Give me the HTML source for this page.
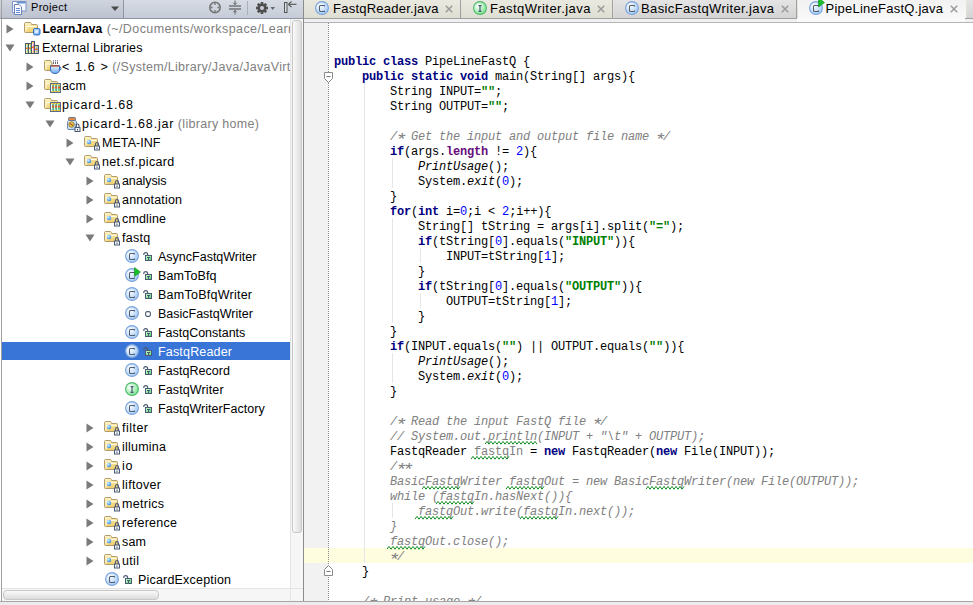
<!DOCTYPE html>
<html><head><meta charset="utf-8">
<style>
*{margin:0;padding:0;box-sizing:border-box}
html,body{width:973px;height:605px;overflow:hidden;background:#ececec;position:relative;font-family:"Liberation Sans",sans-serif}
.abs{position:absolute}
.t{position:absolute;height:19px;line-height:19px;font-size:12.5px;color:#000;white-space:nowrap}
.t b{font-weight:bold;font-size:12px}
.g{color:#808080}
.sel{color:#fff}
.cl{position:absolute;left:334px;height:15px;line-height:15px;font-family:"Liberation Mono",monospace;font-size:12px;letter-spacing:-0.2px;white-space:pre;color:#000}
.k{color:#000080;font-weight:bold}
.f{color:#660e7a;font-weight:bold}
.n{color:#0000ff}
.s{color:#008000;font-weight:bold}
.c{color:#808080;font-style:italic}
.i{font-style:italic}
.w{}
.ast{display:inline-block;width:7px;text-align:center;transform:translateY(3.6px) scale(1.6,1.45)}
.g2{color:#808080}
.tab{position:absolute;top:0;height:18px;line-height:17px;font-size:13px;color:#000;white-space:nowrap}
</style></head><body>
<svg width="0" height="0" style="position:absolute">
<defs>
<radialGradient id="gC" cx="0.35" cy="0.35" r="0.75"><stop offset="0" stop-color="#ffffff"/><stop offset="1" stop-color="#9cc4f4"/></radialGradient>
<radialGradient id="gI" cx="0.35" cy="0.35" r="0.75"><stop offset="0" stop-color="#ffffff"/><stop offset="1" stop-color="#70e488"/></radialGradient>
<linearGradient id="gF" x1="0" y1="0" x2="0.3" y2="1"><stop offset="0" stop-color="#fff6c8"/><stop offset="1" stop-color="#f0d070"/></linearGradient>
<linearGradient id="gB" x1="0" y1="0" x2="1" y2="1"><stop offset="0" stop-color="#cfe6ff"/><stop offset="1" stop-color="#5a9ee8"/></linearGradient>
<radialGradient id="gD" cx="0.35" cy="0.35" r="0.7"><stop offset="0" stop-color="#d8f0ff"/><stop offset="1" stop-color="#2a86e8"/></radialGradient>
<linearGradient id="gCup" x1="0" y1="0" x2="0" y2="1"><stop offset="0" stop-color="#f0f8ff"/><stop offset="1" stop-color="#6aa8f0"/></linearGradient>
<linearGradient id="gJar" x1="0" y1="0" x2="1" y2="1"><stop offset="0" stop-color="#f4faff"/><stop offset="1" stop-color="#9cc8f0"/></linearGradient>
<linearGradient id="gL" x1="0" y1="0" x2="1" y2="1"><stop offset="0" stop-color="#d8ffd8"/><stop offset="1" stop-color="#50d070"/></linearGradient>
</defs></svg>

<!-- left panel -->
<div class="abs" style="left:0;top:0;width:303px;height:601px;background:#fff;overflow:hidden">
  <div class="abs" style="left:0;top:0;width:303px;height:18px;background:linear-gradient(#d6dbe4,#c6ccd7)"></div>
  <div class="abs" style="left:0;top:0;width:123px;height:18px;background:linear-gradient(#cfd4de,#bcc3cf)"></div>
  <div class="abs" style="left:123px;top:0;width:1px;height:18px;background:#8f96a2"></div>
  <div class="abs" style="left:0;top:18px;width:303px;height:1px;background:#8f96a2"></div>
  <div class="abs" style="left:1px;top:0;width:1px;height:601px;background:#a0a0a0"></div>
  <div class="t" style="left:31px;top:-2px;font-size:11px;letter-spacing:0.3px">Project</div>
  <svg style="position:absolute;left:11px;top:1px" width="16" height="15" viewBox="0 0 16 15" ><rect x="4.5" y="0.5" width="10.5" height="9.5" fill="#f4f8ff" stroke="#7a94c4"/><rect x="5" y="1" width="9.5" height="1.5" fill="#6a94d8"/><path d="M1.5 0.5 H5 L7 2.5 V11.5 H1.5Z" fill="#fff" stroke="#8098c8"/><path d="M2.5 4.5 H5 M2.5 6.5 H5 M2.5 8.5 H5" stroke="#8aa8e0" stroke-width="0.8"/><path d="M3.5 3.5 H8 L10.5 6 V13.5 H3.5Z" fill="#fff" stroke="#6a84bc"/><path d="M5 7.5 H9 M5 9.5 H9 M5 11.5 H9" stroke="#4a78d0" stroke-width="0.9"/></svg>
  <svg style="position:absolute;left:111px;top:6px" width="9" height="6" viewBox="0 0 9 6" ><path d="M0 0.5 H8 L4 5Z" fill="#4a4a4a"/></svg>
  <svg style="position:absolute;left:209px;top:1px" width="14" height="14" viewBox="0 0 14 14" ><circle cx="6" cy="6.5" r="5.2" fill="none" stroke="#767676" stroke-width="1.6"/><path d="M6 2 V4 M6 9 V11 M1.5 6.5 H3.5 M8.5 6.5 H10.5" stroke="#767676" stroke-width="1.3"/></svg>
  <svg style="position:absolute;left:229px;top:0px" width="14" height="15" viewBox="0 0 14 15" ><path d="M0 6 H12 M0 9 H12" stroke="#444" stroke-width="1.1" fill="none"/><path d="M6 0.5 V4.5 M4.3 2.8 L6 4.6 L7.7 2.8 M6 14.5 V10.5 M4.3 12.2 L6 10.4 L7.7 12.2" stroke="#555" stroke-width="0.9" fill="none"/></svg>
  <div class="abs" style="left:247px;top:1px;width:1px;height:14px;background:#aab0ba"></div>
  <svg style="position:absolute;left:256px;top:0px" width="20" height="15" viewBox="0 0 20 15" ><g transform="translate(6 8)"><path d="M-1.2 -6 H1.2 L1.6 -3.8 L3.4 -5 L5 -3.4 L3.8 -1.6 L6 -1.2 V1.2 L3.8 1.6 L5 3.4 L3.4 5 L1.6 3.8 L1.2 6 H-1.2 L-1.6 3.8 L-3.4 5 L-5 3.4 L-3.8 1.6 L-6 1.2 V-1.2 L-3.8 -1.6 L-5 -3.4 L-3.4 -5 L-1.6 -3.8Z" fill="#4e4e4e"/><circle r="2" fill="#c9ced8"/></g><path d="M14.5 7 H19 L16.75 10Z" fill="#666"/></svg>
  <svg style="position:absolute;left:284px;top:0px" width="16" height="15" viewBox="0 0 16 15" ><rect x="0.5" y="2.5" width="2.5" height="10" fill="#d8dde6" stroke="#555"/><path d="M5 4.3 H12.5" stroke="#555" stroke-width="1.1"/><path d="M4.3 4.3 L7.5 1.5 M4.3 4.3 L7.5 7" stroke="#555" stroke-width="1.1" fill="none"/></svg>
  <svg style="position:absolute;left:6px;top:24px" width="8" height="10" viewBox="0 0 8 10" ><path d="M0.5 0.5 L7.5 5 L0.5 9.5Z" fill="#7a7a7a"/></svg><svg style="position:absolute;left:24px;top:22px" width="17" height="14" viewBox="0 0 17 14" ><path d="M1.5 0.5 H6 Q7 0.5 7.3 1.5 L7.6 2.5 H12.5 Q13.5 2.5 13.5 3.5 V9.5 Q13.5 10.5 12.5 10.5 H1.5 Q0.5 10.5 0.5 9.5 V1.5 Q0.5 0.5 1.5 0.5Z" fill="url(#gF)" stroke="#b09c6c"/><path d="M2 9.5 V4.5 H12.5" fill="none" stroke="#fffbe6" stroke-width="1"/><path d="M1.5 1.8 H6.2" fill="none" stroke="#fff6cc" stroke-width="1"/><rect x="9.5" y="6.5" width="6.5" height="6.5" rx="1.6" fill="url(#gB)" stroke="#2d6cc6"/><rect x="11.2" y="8.2" width="3" height="3" fill="#eaf4ff" opacity="0.9"/></svg><div class="t " style="left:42px;top:20px"><b style="margin-left:0.5px"><span style="letter-spacing:0.028px">LearnJava</span></b> <span class="g" style="letter-spacing:0.43px;margin-left:1px">(~/Documents/workspace/LearnJava)</span></div><svg style="position:absolute;left:5px;top:44px" width="10" height="8" viewBox="0 0 10 8" ><path d="M0.5 0.5 L9.5 0.5 L5 7.5Z" fill="#7a7a7a"/></svg><svg style="position:absolute;left:25px;top:41px" width="14" height="13" viewBox="0 0 14 13" ><rect x="0.5" y="2.5" width="3" height="10" fill="#86d8a8" stroke="#4c5a72"/><rect x="1" y="3" width="1" height="9" fill="#ffffff" opacity="0.8"/><rect x="1" y="3.2" width="2" height="1" fill="#f8d030" opacity="0.9"/><rect x="1" y="6.5" width="2" height="1.6" fill="#f07010" opacity="0.9"/><rect x="1" y="10.4" width="2" height="1" fill="#f8e040" opacity="0.9"/><rect x="3.5" y="2.5" width="3" height="10" fill="#86d8a8" stroke="#4c5a72"/><rect x="4" y="3" width="1" height="9" fill="#ffffff" opacity="0.8"/><rect x="4" y="3.2" width="2" height="1" fill="#f8d030" opacity="0.9"/><rect x="4" y="6.5" width="2" height="1.6" fill="#f07010" opacity="0.9"/><rect x="4" y="10.4" width="2" height="1" fill="#f8e040" opacity="0.9"/><rect x="6.5" y="0.5" width="3" height="12" fill="#e890b8" stroke="#4c5a72"/><rect x="7" y="1" width="1" height="11" fill="#ffffff" opacity="0.8"/><rect x="7" y="1.2" width="2" height="1" fill="#f8d030" opacity="0.9"/><rect x="7" y="5.4" width="2" height="1.6" fill="#f07010" opacity="0.9"/><rect x="7" y="10.4" width="2" height="1" fill="#f8e040" opacity="0.9"/><rect x="9.5" y="4.5" width="4" height="8" fill="#8ab8f8" stroke="#4c5a72"/><rect x="10" y="5" width="1" height="7" fill="#ffffff" opacity="0.8"/><rect x="10" y="5.2" width="3" height="1" fill="#f8d030" opacity="0.9"/><rect x="10" y="7.6" width="3" height="1.6" fill="#f07010" opacity="0.9"/><rect x="10" y="10.4" width="3" height="1" fill="#f8e040" opacity="0.9"/></svg><div class="t " style="left:42px;top:39px"><span style="letter-spacing:0.19px">External Libraries</span></div><svg style="position:absolute;left:26px;top:62px" width="8" height="10" viewBox="0 0 8 10" ><path d="M0.5 0.5 L7.5 5 L0.5 9.5Z" fill="#7a7a7a"/></svg><svg style="position:absolute;left:44px;top:59px" width="18" height="15" viewBox="0 0 18 15" ><path d="M1.5 1.5 H6 Q7 1.5 7.3 2.5 L7.6 3.5 H8 V11.5 H1.5 Q0.5 11.5 0.5 10.5 V2.5 Q0.5 1.5 1.5 1.5Z" fill="url(#gF)" stroke="#b09c6c"/><path d="M2 10.5 V5 H7" fill="none" stroke="#fffbe6"/><path d="M9.5 1 V2.5 M11.5 1 V2.5 M13.5 1 V2.5" stroke="#7a8aa0" stroke-width="1"/><path d="M9.5 3 V5 M11.5 3 V5 M13.5 3 V5" stroke="#404a58" stroke-width="1" opacity="0.8"/><path d="M6.5 6.5 H15.5 V10 Q15.5 14.5 11 14.5 Q6.5 14.5 6.5 10Z" fill="url(#gCup)" stroke="#3a6cb8"/><path d="M15.5 8 Q17.5 8 17 10 Q16.5 11.5 15 11.5" fill="none" stroke="#3a6cb8"/><path d="M7 7 H15" stroke="#c05a3a" stroke-width="1.5"/></svg><div class="t " style="left:62px;top:58px"><span style="letter-spacing:1.127px">&lt; 1.6 &gt;</span> <span class="g" style="letter-spacing:0.3px">(/System/Library/Java/JavaVirtualMachines)</span></div><svg style="position:absolute;left:26px;top:81px" width="8" height="10" viewBox="0 0 8 10" ><path d="M0.5 0.5 L7.5 5 L0.5 9.5Z" fill="#7a7a7a"/></svg><svg style="position:absolute;left:44px;top:79px" width="17" height="14" viewBox="0 0 17 14" ><path d="M1.5 0.5 H6 Q7 0.5 7.3 1.5 L7.6 2.5 H12.5 Q13.5 2.5 13.5 3.5 V9.5 Q13.5 10.5 12.5 10.5 H1.5 Q0.5 10.5 0.5 9.5 V1.5 Q0.5 0.5 1.5 0.5Z" fill="url(#gF)" stroke="#b09c6c"/><path d="M2 9.5 V4.5 H12.5" fill="none" stroke="#fffbe6" stroke-width="1"/><path d="M1.5 1.8 H6.2" fill="none" stroke="#fff6cc" stroke-width="1"/><rect x="6.5" y="4.5" width="10" height="9" fill="#eef6f0" stroke="#5a6a8a"/><rect x="7" y="5" width="3" height="8" fill="#66d096"/><rect x="7" y="5" width="1" height="8" fill="#f0fff4"/><rect x="7" y="5" width="3" height="1" fill="#f6d040"/><rect x="8" y="7.5" width="2" height="2" fill="#f05a10"/><rect x="7" y="12" width="3" height="1" fill="#f6d040"/><rect x="10" y="5" width="3" height="8" fill="#66d096"/><rect x="10" y="5" width="1" height="8" fill="#f0fff4"/><rect x="10" y="5" width="3" height="1" fill="#f6d040"/><rect x="11" y="7.5" width="2" height="2" fill="#f05a10"/><rect x="10" y="12" width="3" height="1" fill="#f6d040"/><rect x="13" y="5" width="3" height="8" fill="#66d096"/><rect x="13" y="5" width="1" height="8" fill="#f0fff4"/><rect x="13" y="5" width="3" height="1" fill="#f6d040"/><rect x="14" y="7.5" width="2" height="2" fill="#f05a10"/><rect x="13" y="12" width="3" height="1" fill="#f6d040"/><path d="M9.8 5 V13 M12.8 5 V13" stroke="#5a6a8a" stroke-width="0.5"/></svg><div class="t " style="left:62px;top:77px"><span style="letter-spacing:0.088px">acm</span></div><svg style="position:absolute;left:25px;top:101px" width="10" height="8" viewBox="0 0 10 8" ><path d="M0.5 0.5 L9.5 0.5 L5 7.5Z" fill="#7a7a7a"/></svg><svg style="position:absolute;left:44px;top:98px" width="17" height="14" viewBox="0 0 17 14" ><path d="M1.5 0.5 H6 Q7 0.5 7.3 1.5 L7.6 2.5 H12.5 Q13.5 2.5 13.5 3.5 V9.5 Q13.5 10.5 12.5 10.5 H1.5 Q0.5 10.5 0.5 9.5 V1.5 Q0.5 0.5 1.5 0.5Z" fill="url(#gF)" stroke="#b09c6c"/><path d="M2 9.5 V4.5 H12.5" fill="none" stroke="#fffbe6" stroke-width="1"/><path d="M1.5 1.8 H6.2" fill="none" stroke="#fff6cc" stroke-width="1"/><rect x="6.5" y="4.5" width="10" height="9" fill="#eef6f0" stroke="#5a6a8a"/><rect x="7" y="5" width="3" height="8" fill="#66d096"/><rect x="7" y="5" width="1" height="8" fill="#f0fff4"/><rect x="7" y="5" width="3" height="1" fill="#f6d040"/><rect x="8" y="7.5" width="2" height="2" fill="#f05a10"/><rect x="7" y="12" width="3" height="1" fill="#f6d040"/><rect x="10" y="5" width="3" height="8" fill="#66d096"/><rect x="10" y="5" width="1" height="8" fill="#f0fff4"/><rect x="10" y="5" width="3" height="1" fill="#f6d040"/><rect x="11" y="7.5" width="2" height="2" fill="#f05a10"/><rect x="10" y="12" width="3" height="1" fill="#f6d040"/><rect x="13" y="5" width="3" height="8" fill="#66d096"/><rect x="13" y="5" width="1" height="8" fill="#f0fff4"/><rect x="13" y="5" width="3" height="1" fill="#f6d040"/><rect x="14" y="7.5" width="2" height="2" fill="#f05a10"/><rect x="13" y="12" width="3" height="1" fill="#f6d040"/><path d="M9.8 5 V13 M12.8 5 V13" stroke="#5a6a8a" stroke-width="0.5"/></svg><div class="t " style="left:62px;top:96px"><span style="letter-spacing:0.845px">picard-1.68</span></div><svg style="position:absolute;left:45px;top:120px" width="10" height="8" viewBox="0 0 10 8" ><path d="M0.5 0.5 L9.5 0.5 L5 7.5Z" fill="#7a7a7a"/></svg><svg style="position:absolute;left:66px;top:116px" width="15" height="16" viewBox="0 0 15 16" ><path d="M2.5 4.5 Q1.5 5 1.5 7 V12.5 Q1.5 13.5 3 13.5 H9 Q10.5 13.5 10.5 12.5 V7 Q10.5 5 9.5 4.5Z" fill="url(#gJar)" stroke="#6a88b0"/><rect x="2.5" y="1.5" width="7" height="3" rx="0.8" fill="#e08a4a" stroke="#6a7890"/><circle cx="5.5" cy="8.5" r="2.8" fill="#e8c04a" stroke="#8a6a20" stroke-width="0.7"/><path d="M4 7.5 L7 9.5" stroke="#7a3a30" stroke-width="0.9"/><path d="M10.0 11.5 V9.8 Q10.0 8.0 11.5 8.0 Q13.0 8.0 13.0 9.8 V11.5" fill="none" stroke="#4a5a74" stroke-width="1.1"/><rect x="9.0" y="11.5" width="5" height="4" fill="#f4f4f4" stroke="#4a5a74"/><rect x="11.0" y="13.0" width="1" height="1.5" fill="#4a5a74"/></svg><div class="t " style="left:82px;top:115px"><span style="letter-spacing:0.828px">picard-1.68.jar</span> <span class="g"><span style="letter-spacing:0.315px">(library home)</span></span></div><svg style="position:absolute;left:66px;top:138px" width="8" height="10" viewBox="0 0 8 10" ><path d="M0.5 0.5 L7.5 5 L0.5 9.5Z" fill="#7a7a7a"/></svg><svg style="position:absolute;left:84px;top:136px" width="17" height="15" viewBox="0 0 17 15" ><path d="M1.5 0.5 H6 Q7 0.5 7.3 1.5 L7.6 2.5 H12.5 Q13.5 2.5 13.5 3.5 V9.5 Q13.5 10.5 12.5 10.5 H1.5 Q0.5 10.5 0.5 9.5 V1.5 Q0.5 0.5 1.5 0.5Z" fill="url(#gF)" stroke="#b09c6c"/><path d="M2 9.5 V4.5 H12.5" fill="none" stroke="#fffbe6" stroke-width="1"/><path d="M1.5 1.8 H6.2" fill="none" stroke="#fff6cc" stroke-width="1"/><circle cx="5" cy="6" r="2.2" fill="url(#gD)"/><path d="M11.5 10 V8.3 Q11.5 6.5 13 6.5 Q14.5 6.5 14.5 8.3 V10" fill="none" stroke="#4a5a74" stroke-width="1.1"/><rect x="10.5" y="10" width="5" height="4" fill="#f4f4f4" stroke="#4a5a74"/><rect x="12.5" y="11.5" width="1" height="1.5" fill="#4a5a74"/></svg><div class="t " style="left:102px;top:134px"><span style="letter-spacing:0.058px">META-INF</span></div><svg style="position:absolute;left:65px;top:158px" width="10" height="8" viewBox="0 0 10 8" ><path d="M0.5 0.5 L9.5 0.5 L5 7.5Z" fill="#7a7a7a"/></svg><svg style="position:absolute;left:84px;top:155px" width="17" height="15" viewBox="0 0 17 15" ><path d="M1.5 0.5 H6 Q7 0.5 7.3 1.5 L7.6 2.5 H12.5 Q13.5 2.5 13.5 3.5 V9.5 Q13.5 10.5 12.5 10.5 H1.5 Q0.5 10.5 0.5 9.5 V1.5 Q0.5 0.5 1.5 0.5Z" fill="url(#gF)" stroke="#b09c6c"/><path d="M2 9.5 V4.5 H12.5" fill="none" stroke="#fffbe6" stroke-width="1"/><path d="M1.5 1.8 H6.2" fill="none" stroke="#fff6cc" stroke-width="1"/><circle cx="5" cy="6" r="2.2" fill="url(#gD)"/><path d="M11.5 10 V8.3 Q11.5 6.5 13 6.5 Q14.5 6.5 14.5 8.3 V10" fill="none" stroke="#4a5a74" stroke-width="1.1"/><rect x="10.5" y="10" width="5" height="4" fill="#f4f4f4" stroke="#4a5a74"/><rect x="12.5" y="11.5" width="1" height="1.5" fill="#4a5a74"/></svg><div class="t " style="left:102px;top:153px"><span style="letter-spacing:0.351px">net.sf.picard</span></div><svg style="position:absolute;left:86px;top:176px" width="8" height="10" viewBox="0 0 8 10" ><path d="M0.5 0.5 L7.5 5 L0.5 9.5Z" fill="#7a7a7a"/></svg><svg style="position:absolute;left:104px;top:174px" width="17" height="15" viewBox="0 0 17 15" ><path d="M1.5 0.5 H6 Q7 0.5 7.3 1.5 L7.6 2.5 H12.5 Q13.5 2.5 13.5 3.5 V9.5 Q13.5 10.5 12.5 10.5 H1.5 Q0.5 10.5 0.5 9.5 V1.5 Q0.5 0.5 1.5 0.5Z" fill="url(#gF)" stroke="#b09c6c"/><path d="M2 9.5 V4.5 H12.5" fill="none" stroke="#fffbe6" stroke-width="1"/><path d="M1.5 1.8 H6.2" fill="none" stroke="#fff6cc" stroke-width="1"/><circle cx="5" cy="6" r="2.2" fill="url(#gD)"/><path d="M11.5 10 V8.3 Q11.5 6.5 13 6.5 Q14.5 6.5 14.5 8.3 V10" fill="none" stroke="#4a5a74" stroke-width="1.1"/><rect x="10.5" y="10" width="5" height="4" fill="#f4f4f4" stroke="#4a5a74"/><rect x="12.5" y="11.5" width="1" height="1.5" fill="#4a5a74"/></svg><div class="t " style="left:122px;top:172px"><span style="letter-spacing:-0.096px">analysis</span></div><svg style="position:absolute;left:86px;top:195px" width="8" height="10" viewBox="0 0 8 10" ><path d="M0.5 0.5 L7.5 5 L0.5 9.5Z" fill="#7a7a7a"/></svg><svg style="position:absolute;left:104px;top:193px" width="17" height="15" viewBox="0 0 17 15" ><path d="M1.5 0.5 H6 Q7 0.5 7.3 1.5 L7.6 2.5 H12.5 Q13.5 2.5 13.5 3.5 V9.5 Q13.5 10.5 12.5 10.5 H1.5 Q0.5 10.5 0.5 9.5 V1.5 Q0.5 0.5 1.5 0.5Z" fill="url(#gF)" stroke="#b09c6c"/><path d="M2 9.5 V4.5 H12.5" fill="none" stroke="#fffbe6" stroke-width="1"/><path d="M1.5 1.8 H6.2" fill="none" stroke="#fff6cc" stroke-width="1"/><circle cx="5" cy="6" r="2.2" fill="url(#gD)"/><path d="M11.5 10 V8.3 Q11.5 6.5 13 6.5 Q14.5 6.5 14.5 8.3 V10" fill="none" stroke="#4a5a74" stroke-width="1.1"/><rect x="10.5" y="10" width="5" height="4" fill="#f4f4f4" stroke="#4a5a74"/><rect x="12.5" y="11.5" width="1" height="1.5" fill="#4a5a74"/></svg><div class="t " style="left:122px;top:191px"><span style="letter-spacing:0.179px">annotation</span></div><svg style="position:absolute;left:86px;top:214px" width="8" height="10" viewBox="0 0 8 10" ><path d="M0.5 0.5 L7.5 5 L0.5 9.5Z" fill="#7a7a7a"/></svg><svg style="position:absolute;left:104px;top:212px" width="17" height="15" viewBox="0 0 17 15" ><path d="M1.5 0.5 H6 Q7 0.5 7.3 1.5 L7.6 2.5 H12.5 Q13.5 2.5 13.5 3.5 V9.5 Q13.5 10.5 12.5 10.5 H1.5 Q0.5 10.5 0.5 9.5 V1.5 Q0.5 0.5 1.5 0.5Z" fill="url(#gF)" stroke="#b09c6c"/><path d="M2 9.5 V4.5 H12.5" fill="none" stroke="#fffbe6" stroke-width="1"/><path d="M1.5 1.8 H6.2" fill="none" stroke="#fff6cc" stroke-width="1"/><circle cx="5" cy="6" r="2.2" fill="url(#gD)"/><path d="M11.5 10 V8.3 Q11.5 6.5 13 6.5 Q14.5 6.5 14.5 8.3 V10" fill="none" stroke="#4a5a74" stroke-width="1.1"/><rect x="10.5" y="10" width="5" height="4" fill="#f4f4f4" stroke="#4a5a74"/><rect x="12.5" y="11.5" width="1" height="1.5" fill="#4a5a74"/></svg><div class="t " style="left:122px;top:210px"><span style="letter-spacing:0.154px">cmdline</span></div><svg style="position:absolute;left:85px;top:234px" width="10" height="8" viewBox="0 0 10 8" ><path d="M0.5 0.5 L9.5 0.5 L5 7.5Z" fill="#7a7a7a"/></svg><svg style="position:absolute;left:104px;top:231px" width="17" height="15" viewBox="0 0 17 15" ><path d="M1.5 0.5 H6 Q7 0.5 7.3 1.5 L7.6 2.5 H12.5 Q13.5 2.5 13.5 3.5 V9.5 Q13.5 10.5 12.5 10.5 H1.5 Q0.5 10.5 0.5 9.5 V1.5 Q0.5 0.5 1.5 0.5Z" fill="url(#gF)" stroke="#b09c6c"/><path d="M2 9.5 V4.5 H12.5" fill="none" stroke="#fffbe6" stroke-width="1"/><path d="M1.5 1.8 H6.2" fill="none" stroke="#fff6cc" stroke-width="1"/><circle cx="5" cy="6" r="2.2" fill="url(#gD)"/><path d="M11.5 10 V8.3 Q11.5 6.5 13 6.5 Q14.5 6.5 14.5 8.3 V10" fill="none" stroke="#4a5a74" stroke-width="1.1"/><rect x="10.5" y="10" width="5" height="4" fill="#f4f4f4" stroke="#4a5a74"/><rect x="12.5" y="11.5" width="1" height="1.5" fill="#4a5a74"/></svg><div class="t " style="left:122px;top:229px"><span style="letter-spacing:0.298px">fastq</span></div><svg style="position:absolute;left:125px;top:249px" width="14" height="14" viewBox="0 0 14 14" overflow="visible"><circle cx="7" cy="7" r="6.4" fill="url(#gC)" stroke="#7aa4dc" stroke-width="1.1"/><path d="M9.4 5.5 V4.5 H5.5 Q4.5 4.5 4.5 5.5 V9.5 Q4.5 10.5 5.5 10.5 H9.4 V9.5" fill="none" stroke="#4e5e74" stroke-width="1.05"/></svg><svg style="position:absolute;left:143px;top:252px" width="10" height="10" viewBox="0 0 10 10" ><path d="M0.8 3 V2.5 Q0.8 0.6 2.7 0.6 Q4.6 0.6 4.6 2.5 V3.5" fill="none" stroke="#4a5a70" stroke-width="1.2"/><rect x="2.5" y="3.5" width="6" height="5" fill="url(#gL)" stroke="#4a5a70"/><path d="M4 5.5 H7 M5.5 5.5 V8" stroke="#4a5a70" stroke-width="1"/></svg><div class="t " style="left:158px;top:248px"><span style="letter-spacing:-0.0px">AsyncFastqWriter</span></div><svg style="position:absolute;left:125px;top:268px" width="14" height="14" viewBox="0 0 14 14" overflow="visible"><circle cx="7" cy="7" r="6.4" fill="url(#gC)" stroke="#7aa4dc" stroke-width="1.1"/><path d="M9.4 5.5 V4.5 H5.5 Q4.5 4.5 4.5 5.5 V9.5 Q4.5 10.5 5.5 10.5 H9.4 V9.5" fill="none" stroke="#4e5e74" stroke-width="1.05"/><path d="M9.5 -0.5 L15.5 4 L9.5 8.5Z" fill="#18c028" stroke="#108a18" stroke-width="0.6"/></svg><svg style="position:absolute;left:143px;top:271px" width="10" height="10" viewBox="0 0 10 10" ><path d="M0.8 3 V2.5 Q0.8 0.6 2.7 0.6 Q4.6 0.6 4.6 2.5 V3.5" fill="none" stroke="#4a5a70" stroke-width="1.2"/><rect x="2.5" y="3.5" width="6" height="5" fill="url(#gL)" stroke="#4a5a70"/><path d="M4 5.5 H7 M5.5 5.5 V8" stroke="#4a5a70" stroke-width="1"/></svg><div class="t " style="left:158px;top:267px"><span style="letter-spacing:0.118px">BamToBfq</span></div><svg style="position:absolute;left:125px;top:287px" width="14" height="14" viewBox="0 0 14 14" overflow="visible"><circle cx="7" cy="7" r="6.4" fill="url(#gC)" stroke="#7aa4dc" stroke-width="1.1"/><path d="M9.4 5.5 V4.5 H5.5 Q4.5 4.5 4.5 5.5 V9.5 Q4.5 10.5 5.5 10.5 H9.4 V9.5" fill="none" stroke="#4e5e74" stroke-width="1.05"/></svg><svg style="position:absolute;left:143px;top:290px" width="10" height="10" viewBox="0 0 10 10" ><path d="M0.8 3 V2.5 Q0.8 0.6 2.7 0.6 Q4.6 0.6 4.6 2.5 V3.5" fill="none" stroke="#4a5a70" stroke-width="1.2"/><rect x="2.5" y="3.5" width="6" height="5" fill="url(#gL)" stroke="#4a5a70"/><path d="M4 5.5 H7 M5.5 5.5 V8" stroke="#4a5a70" stroke-width="1"/></svg><div class="t " style="left:158px;top:286px"><span style="letter-spacing:0.249px">BamToBfqWriter</span></div><svg style="position:absolute;left:125px;top:306px" width="14" height="14" viewBox="0 0 14 14" overflow="visible"><circle cx="7" cy="7" r="6.4" fill="url(#gC)" stroke="#7aa4dc" stroke-width="1.1"/><path d="M9.4 5.5 V4.5 H5.5 Q4.5 4.5 4.5 5.5 V9.5 Q4.5 10.5 5.5 10.5 H9.4 V9.5" fill="none" stroke="#4e5e74" stroke-width="1.05"/></svg><svg style="position:absolute;left:145px;top:311px" width="6" height="6" viewBox="0 0 6 6" ><rect x="0.6" y="0.6" width="4.8" height="4.8" rx="1.6" fill="none" stroke="#4a5a70" stroke-width="1.1"/></svg><div class="t " style="left:158px;top:305px"><span style="letter-spacing:-0.009px">BasicFastqWriter</span></div><svg style="position:absolute;left:125px;top:325px" width="14" height="14" viewBox="0 0 14 14" overflow="visible"><circle cx="7" cy="7" r="6.4" fill="url(#gC)" stroke="#7aa4dc" stroke-width="1.1"/><path d="M9.4 5.5 V4.5 H5.5 Q4.5 4.5 4.5 5.5 V9.5 Q4.5 10.5 5.5 10.5 H9.4 V9.5" fill="none" stroke="#4e5e74" stroke-width="1.05"/></svg><svg style="position:absolute;left:143px;top:328px" width="10" height="10" viewBox="0 0 10 10" ><path d="M0.8 3 V2.5 Q0.8 0.6 2.7 0.6 Q4.6 0.6 4.6 2.5 V3.5" fill="none" stroke="#4a5a70" stroke-width="1.2"/><rect x="2.5" y="3.5" width="6" height="5" fill="url(#gL)" stroke="#4a5a70"/><path d="M4 5.5 H7 M5.5 5.5 V8" stroke="#4a5a70" stroke-width="1"/></svg><div class="t " style="left:158px;top:324px"><span style="letter-spacing:-0.019px">FastqConstants</span></div><div style="position:absolute;left:2px;top:342px;width:288px;height:18px;background:#3875d7"></div><svg style="position:absolute;left:125px;top:344px" width="14" height="14" viewBox="0 0 14 14" overflow="visible"><circle cx="7" cy="7" r="6.4" fill="url(#gC)" stroke="#7aa4dc" stroke-width="1.1"/><path d="M9.4 5.5 V4.5 H5.5 Q4.5 4.5 4.5 5.5 V9.5 Q4.5 10.5 5.5 10.5 H9.4 V9.5" fill="none" stroke="#4e5e74" stroke-width="1.05"/></svg><svg style="position:absolute;left:143px;top:347px" width="10" height="10" viewBox="0 0 10 10" ><path d="M0.8 3 V2.5 Q0.8 0.6 2.7 0.6 Q4.6 0.6 4.6 2.5 V3.5" fill="none" stroke="#4a5a70" stroke-width="1.2"/><rect x="2.5" y="3.5" width="6" height="5" fill="url(#gL)" stroke="#4a5a70"/><path d="M4 5.5 H7 M5.5 5.5 V8" stroke="#4a5a70" stroke-width="1"/></svg><div class="t sel" style="left:158px;top:343px"><span style="letter-spacing:0.173px">FastqReader</span></div><svg style="position:absolute;left:125px;top:363px" width="14" height="14" viewBox="0 0 14 14" overflow="visible"><circle cx="7" cy="7" r="6.4" fill="url(#gC)" stroke="#7aa4dc" stroke-width="1.1"/><path d="M9.4 5.5 V4.5 H5.5 Q4.5 4.5 4.5 5.5 V9.5 Q4.5 10.5 5.5 10.5 H9.4 V9.5" fill="none" stroke="#4e5e74" stroke-width="1.05"/></svg><svg style="position:absolute;left:143px;top:366px" width="10" height="10" viewBox="0 0 10 10" ><path d="M0.8 3 V2.5 Q0.8 0.6 2.7 0.6 Q4.6 0.6 4.6 2.5 V3.5" fill="none" stroke="#4a5a70" stroke-width="1.2"/><rect x="2.5" y="3.5" width="6" height="5" fill="url(#gL)" stroke="#4a5a70"/><path d="M4 5.5 H7 M5.5 5.5 V8" stroke="#4a5a70" stroke-width="1"/></svg><div class="t " style="left:158px;top:362px"><span style="letter-spacing:0.044px">FastqRecord</span></div><svg style="position:absolute;left:125px;top:382px" width="14" height="14" viewBox="0 0 14 14" overflow="visible"><circle cx="7" cy="7" r="6.4" fill="url(#gI)" stroke="#4ab86a" stroke-width="1.1"/><path d="M5.5 4.6 H8.5 M7 4.6 V10.4 M5.5 10.4 H8.5" fill="none" stroke="#4a5a70" stroke-width="1.2"/></svg><svg style="position:absolute;left:143px;top:385px" width="10" height="10" viewBox="0 0 10 10" ><path d="M0.8 3 V2.5 Q0.8 0.6 2.7 0.6 Q4.6 0.6 4.6 2.5 V3.5" fill="none" stroke="#4a5a70" stroke-width="1.2"/><rect x="2.5" y="3.5" width="6" height="5" fill="url(#gL)" stroke="#4a5a70"/><path d="M4 5.5 H7 M5.5 5.5 V8" stroke="#4a5a70" stroke-width="1"/></svg><div class="t " style="left:158px;top:381px"><span style="letter-spacing:0.122px">FastqWriter</span></div><svg style="position:absolute;left:125px;top:401px" width="14" height="14" viewBox="0 0 14 14" overflow="visible"><circle cx="7" cy="7" r="6.4" fill="url(#gC)" stroke="#7aa4dc" stroke-width="1.1"/><path d="M9.4 5.5 V4.5 H5.5 Q4.5 4.5 4.5 5.5 V9.5 Q4.5 10.5 5.5 10.5 H9.4 V9.5" fill="none" stroke="#4e5e74" stroke-width="1.05"/></svg><svg style="position:absolute;left:143px;top:404px" width="10" height="10" viewBox="0 0 10 10" ><path d="M0.8 3 V2.5 Q0.8 0.6 2.7 0.6 Q4.6 0.6 4.6 2.5 V3.5" fill="none" stroke="#4a5a70" stroke-width="1.2"/><rect x="2.5" y="3.5" width="6" height="5" fill="url(#gL)" stroke="#4a5a70"/><path d="M4 5.5 H7 M5.5 5.5 V8" stroke="#4a5a70" stroke-width="1"/></svg><div class="t " style="left:158px;top:400px"><span style="letter-spacing:0.038px">FastqWriterFactory</span></div><svg style="position:absolute;left:86px;top:423px" width="8" height="10" viewBox="0 0 8 10" ><path d="M0.5 0.5 L7.5 5 L0.5 9.5Z" fill="#7a7a7a"/></svg><svg style="position:absolute;left:104px;top:421px" width="17" height="15" viewBox="0 0 17 15" ><path d="M1.5 0.5 H6 Q7 0.5 7.3 1.5 L7.6 2.5 H12.5 Q13.5 2.5 13.5 3.5 V9.5 Q13.5 10.5 12.5 10.5 H1.5 Q0.5 10.5 0.5 9.5 V1.5 Q0.5 0.5 1.5 0.5Z" fill="url(#gF)" stroke="#b09c6c"/><path d="M2 9.5 V4.5 H12.5" fill="none" stroke="#fffbe6" stroke-width="1"/><path d="M1.5 1.8 H6.2" fill="none" stroke="#fff6cc" stroke-width="1"/><circle cx="5" cy="6" r="2.2" fill="url(#gD)"/><path d="M11.5 10 V8.3 Q11.5 6.5 13 6.5 Q14.5 6.5 14.5 8.3 V10" fill="none" stroke="#4a5a74" stroke-width="1.1"/><rect x="10.5" y="10" width="5" height="4" fill="#f4f4f4" stroke="#4a5a74"/><rect x="12.5" y="11.5" width="1" height="1.5" fill="#4a5a74"/></svg><div class="t " style="left:122px;top:419px"><span style="letter-spacing:0.475px">filter</span></div><svg style="position:absolute;left:86px;top:442px" width="8" height="10" viewBox="0 0 8 10" ><path d="M0.5 0.5 L7.5 5 L0.5 9.5Z" fill="#7a7a7a"/></svg><svg style="position:absolute;left:104px;top:440px" width="17" height="15" viewBox="0 0 17 15" ><path d="M1.5 0.5 H6 Q7 0.5 7.3 1.5 L7.6 2.5 H12.5 Q13.5 2.5 13.5 3.5 V9.5 Q13.5 10.5 12.5 10.5 H1.5 Q0.5 10.5 0.5 9.5 V1.5 Q0.5 0.5 1.5 0.5Z" fill="url(#gF)" stroke="#b09c6c"/><path d="M2 9.5 V4.5 H12.5" fill="none" stroke="#fffbe6" stroke-width="1"/><path d="M1.5 1.8 H6.2" fill="none" stroke="#fff6cc" stroke-width="1"/><circle cx="5" cy="6" r="2.2" fill="url(#gD)"/><path d="M11.5 10 V8.3 Q11.5 6.5 13 6.5 Q14.5 6.5 14.5 8.3 V10" fill="none" stroke="#4a5a74" stroke-width="1.1"/><rect x="10.5" y="10" width="5" height="4" fill="#f4f4f4" stroke="#4a5a74"/><rect x="12.5" y="11.5" width="1" height="1.5" fill="#4a5a74"/></svg><div class="t " style="left:122px;top:438px"><span style="letter-spacing:0.23px">illumina</span></div><svg style="position:absolute;left:86px;top:461px" width="8" height="10" viewBox="0 0 8 10" ><path d="M0.5 0.5 L7.5 5 L0.5 9.5Z" fill="#7a7a7a"/></svg><svg style="position:absolute;left:104px;top:459px" width="17" height="15" viewBox="0 0 17 15" ><path d="M1.5 0.5 H6 Q7 0.5 7.3 1.5 L7.6 2.5 H12.5 Q13.5 2.5 13.5 3.5 V9.5 Q13.5 10.5 12.5 10.5 H1.5 Q0.5 10.5 0.5 9.5 V1.5 Q0.5 0.5 1.5 0.5Z" fill="url(#gF)" stroke="#b09c6c"/><path d="M2 9.5 V4.5 H12.5" fill="none" stroke="#fffbe6" stroke-width="1"/><path d="M1.5 1.8 H6.2" fill="none" stroke="#fff6cc" stroke-width="1"/><circle cx="5" cy="6" r="2.2" fill="url(#gD)"/><path d="M11.5 10 V8.3 Q11.5 6.5 13 6.5 Q14.5 6.5 14.5 8.3 V10" fill="none" stroke="#4a5a74" stroke-width="1.1"/><rect x="10.5" y="10" width="5" height="4" fill="#f4f4f4" stroke="#4a5a74"/><rect x="12.5" y="11.5" width="1" height="1.5" fill="#4a5a74"/></svg><div class="t " style="left:122px;top:457px"><span style="letter-spacing:0.766px">io</span></div><svg style="position:absolute;left:86px;top:480px" width="8" height="10" viewBox="0 0 8 10" ><path d="M0.5 0.5 L7.5 5 L0.5 9.5Z" fill="#7a7a7a"/></svg><svg style="position:absolute;left:104px;top:478px" width="17" height="15" viewBox="0 0 17 15" ><path d="M1.5 0.5 H6 Q7 0.5 7.3 1.5 L7.6 2.5 H12.5 Q13.5 2.5 13.5 3.5 V9.5 Q13.5 10.5 12.5 10.5 H1.5 Q0.5 10.5 0.5 9.5 V1.5 Q0.5 0.5 1.5 0.5Z" fill="url(#gF)" stroke="#b09c6c"/><path d="M2 9.5 V4.5 H12.5" fill="none" stroke="#fffbe6" stroke-width="1"/><path d="M1.5 1.8 H6.2" fill="none" stroke="#fff6cc" stroke-width="1"/><circle cx="5" cy="6" r="2.2" fill="url(#gD)"/><path d="M11.5 10 V8.3 Q11.5 6.5 13 6.5 Q14.5 6.5 14.5 8.3 V10" fill="none" stroke="#4a5a74" stroke-width="1.1"/><rect x="10.5" y="10" width="5" height="4" fill="#f4f4f4" stroke="#4a5a74"/><rect x="12.5" y="11.5" width="1" height="1.5" fill="#4a5a74"/></svg><div class="t " style="left:122px;top:476px"><span style="letter-spacing:0.31px">liftover</span></div><svg style="position:absolute;left:86px;top:499px" width="8" height="10" viewBox="0 0 8 10" ><path d="M0.5 0.5 L7.5 5 L0.5 9.5Z" fill="#7a7a7a"/></svg><svg style="position:absolute;left:104px;top:497px" width="17" height="15" viewBox="0 0 17 15" ><path d="M1.5 0.5 H6 Q7 0.5 7.3 1.5 L7.6 2.5 H12.5 Q13.5 2.5 13.5 3.5 V9.5 Q13.5 10.5 12.5 10.5 H1.5 Q0.5 10.5 0.5 9.5 V1.5 Q0.5 0.5 1.5 0.5Z" fill="url(#gF)" stroke="#b09c6c"/><path d="M2 9.5 V4.5 H12.5" fill="none" stroke="#fffbe6" stroke-width="1"/><path d="M1.5 1.8 H6.2" fill="none" stroke="#fff6cc" stroke-width="1"/><circle cx="5" cy="6" r="2.2" fill="url(#gD)"/><path d="M11.5 10 V8.3 Q11.5 6.5 13 6.5 Q14.5 6.5 14.5 8.3 V10" fill="none" stroke="#4a5a74" stroke-width="1.1"/><rect x="10.5" y="10" width="5" height="4" fill="#f4f4f4" stroke="#4a5a74"/><rect x="12.5" y="11.5" width="1" height="1.5" fill="#4a5a74"/></svg><div class="t " style="left:122px;top:495px"><span style="letter-spacing:0.286px">metrics</span></div><svg style="position:absolute;left:86px;top:518px" width="8" height="10" viewBox="0 0 8 10" ><path d="M0.5 0.5 L7.5 5 L0.5 9.5Z" fill="#7a7a7a"/></svg><svg style="position:absolute;left:104px;top:516px" width="17" height="15" viewBox="0 0 17 15" ><path d="M1.5 0.5 H6 Q7 0.5 7.3 1.5 L7.6 2.5 H12.5 Q13.5 2.5 13.5 3.5 V9.5 Q13.5 10.5 12.5 10.5 H1.5 Q0.5 10.5 0.5 9.5 V1.5 Q0.5 0.5 1.5 0.5Z" fill="url(#gF)" stroke="#b09c6c"/><path d="M2 9.5 V4.5 H12.5" fill="none" stroke="#fffbe6" stroke-width="1"/><path d="M1.5 1.8 H6.2" fill="none" stroke="#fff6cc" stroke-width="1"/><circle cx="5" cy="6" r="2.2" fill="url(#gD)"/><path d="M11.5 10 V8.3 Q11.5 6.5 13 6.5 Q14.5 6.5 14.5 8.3 V10" fill="none" stroke="#4a5a74" stroke-width="1.1"/><rect x="10.5" y="10" width="5" height="4" fill="#f4f4f4" stroke="#4a5a74"/><rect x="12.5" y="11.5" width="1" height="1.5" fill="#4a5a74"/></svg><div class="t " style="left:122px;top:514px"><span style="letter-spacing:0.273px">reference</span></div><svg style="position:absolute;left:86px;top:537px" width="8" height="10" viewBox="0 0 8 10" ><path d="M0.5 0.5 L7.5 5 L0.5 9.5Z" fill="#7a7a7a"/></svg><svg style="position:absolute;left:104px;top:535px" width="17" height="15" viewBox="0 0 17 15" ><path d="M1.5 0.5 H6 Q7 0.5 7.3 1.5 L7.6 2.5 H12.5 Q13.5 2.5 13.5 3.5 V9.5 Q13.5 10.5 12.5 10.5 H1.5 Q0.5 10.5 0.5 9.5 V1.5 Q0.5 0.5 1.5 0.5Z" fill="url(#gF)" stroke="#b09c6c"/><path d="M2 9.5 V4.5 H12.5" fill="none" stroke="#fffbe6" stroke-width="1"/><path d="M1.5 1.8 H6.2" fill="none" stroke="#fff6cc" stroke-width="1"/><circle cx="5" cy="6" r="2.2" fill="url(#gD)"/><path d="M11.5 10 V8.3 Q11.5 6.5 13 6.5 Q14.5 6.5 14.5 8.3 V10" fill="none" stroke="#4a5a74" stroke-width="1.1"/><rect x="10.5" y="10" width="5" height="4" fill="#f4f4f4" stroke="#4a5a74"/><rect x="12.5" y="11.5" width="1" height="1.5" fill="#4a5a74"/></svg><div class="t " style="left:122px;top:533px"><span style="letter-spacing:0.188px">sam</span></div><svg style="position:absolute;left:86px;top:556px" width="8" height="10" viewBox="0 0 8 10" ><path d="M0.5 0.5 L7.5 5 L0.5 9.5Z" fill="#7a7a7a"/></svg><svg style="position:absolute;left:104px;top:554px" width="17" height="15" viewBox="0 0 17 15" ><path d="M1.5 0.5 H6 Q7 0.5 7.3 1.5 L7.6 2.5 H12.5 Q13.5 2.5 13.5 3.5 V9.5 Q13.5 10.5 12.5 10.5 H1.5 Q0.5 10.5 0.5 9.5 V1.5 Q0.5 0.5 1.5 0.5Z" fill="url(#gF)" stroke="#b09c6c"/><path d="M2 9.5 V4.5 H12.5" fill="none" stroke="#fffbe6" stroke-width="1"/><path d="M1.5 1.8 H6.2" fill="none" stroke="#fff6cc" stroke-width="1"/><circle cx="5" cy="6" r="2.2" fill="url(#gD)"/><path d="M11.5 10 V8.3 Q11.5 6.5 13 6.5 Q14.5 6.5 14.5 8.3 V10" fill="none" stroke="#4a5a74" stroke-width="1.1"/><rect x="10.5" y="10" width="5" height="4" fill="#f4f4f4" stroke="#4a5a74"/><rect x="12.5" y="11.5" width="1" height="1.5" fill="#4a5a74"/></svg><div class="t " style="left:122px;top:552px"><span style="letter-spacing:0.339px">util</span></div><svg style="position:absolute;left:105px;top:572px" width="14" height="14" viewBox="0 0 14 14" overflow="visible"><circle cx="7" cy="7" r="6.4" fill="url(#gC)" stroke="#7aa4dc" stroke-width="1.1"/><path d="M9.4 5.5 V4.5 H5.5 Q4.5 4.5 4.5 5.5 V9.5 Q4.5 10.5 5.5 10.5 H9.4 V9.5" fill="none" stroke="#4e5e74" stroke-width="1.05"/></svg><svg style="position:absolute;left:123px;top:575px" width="10" height="10" viewBox="0 0 10 10" ><path d="M0.8 3 V2.5 Q0.8 0.6 2.7 0.6 Q4.6 0.6 4.6 2.5 V3.5" fill="none" stroke="#4a5a70" stroke-width="1.2"/><rect x="2.5" y="3.5" width="6" height="5" fill="url(#gL)" stroke="#4a5a70"/><path d="M4 5.5 H7 M5.5 5.5 V8" stroke="#4a5a70" stroke-width="1"/></svg><div class="t " style="left:138px;top:571px"><span style="letter-spacing:0.191px">PicardException</span></div>
  <!-- vertical scrollbar -->
  <div class="abs" style="left:290px;top:19px;width:13px;height:569px;background:#f6f6f6;border-left:1px solid #e4e4e4"></div>
  <div class="abs" style="left:292px;top:20px;width:10px;height:513px;border-radius:3px;background:linear-gradient(90deg,#fafafa,#dcdcdc);border:1px solid #c8c8c8"></div>
  <!-- horizontal scrollbar -->
  <div class="abs" style="left:2px;top:588px;width:288px;height:13px;background:#f6f6f6;border-top:1px solid #e4e4e4"></div>
  <div class="abs" style="left:3px;top:590px;width:156px;height:10px;border-radius:4px;background:linear-gradient(#fafafa,#dcdcdc);border:1px solid #c8c8c8"></div>
  <div class="abs" style="left:290px;top:588px;width:13px;height:13px;background:#f6f6f6;border-left:1px solid #e4e4e4;border-top:1px solid #e4e4e4"></div>
</div>
<div class="abs" style="left:303px;top:0;width:1px;height:602px;background:#8c8c8c"></div>

<!-- editor -->
<div class="abs" style="left:304px;top:0;width:669px;height:601px;background:#fff;overflow:hidden">
  <div class="abs" style="left:0;top:0;width:669px;height:18px;background:linear-gradient(#e9e8df,#dddcd1)"></div><div class="abs" style="left:0px;top:0;width:157px;height:18px;background:linear-gradient(#eae9e0,#dfded3)"></div><div class="abs" style="left:156px;top:0;width:1px;height:18px;background:#a0a0a0"></div><svg style="position:absolute;left:11px;top:1px" width="14" height="14" viewBox="0 0 14 14" overflow="visible"><circle cx="7" cy="7" r="6.4" fill="url(#gC)" stroke="#7aa4dc" stroke-width="1.1"/><path d="M9.4 5.5 V4.5 H5.5 Q4.5 4.5 4.5 5.5 V9.5 Q4.5 10.5 5.5 10.5 H9.4 V9.5" fill="none" stroke="#4e5e74" stroke-width="1.05"/></svg><div class="tab" style="left:29px;letter-spacing:0.24px">FastqReader.java</div><svg style="position:absolute;left:141px;top:5px" width="8" height="8" viewBox="0 0 8 8" ><path d="M0.8 0.8 L7.2 7.2 M7.2 0.8 L0.8 7.2" stroke="#9a9a9a" stroke-width="1.5"/></svg><div class="abs" style="left:158px;top:0;width:151px;height:18px;background:linear-gradient(#eae9e0,#dfded3)"></div><div class="abs" style="left:308px;top:0;width:1px;height:18px;background:#a0a0a0"></div><svg style="position:absolute;left:169px;top:1px" width="14" height="14" viewBox="0 0 14 14" overflow="visible"><circle cx="7" cy="7" r="6.4" fill="url(#gI)" stroke="#4ab86a" stroke-width="1.1"/><path d="M5.5 4.6 H8.5 M7 4.6 V10.4 M5.5 10.4 H8.5" fill="none" stroke="#4a5a70" stroke-width="1.2"/></svg><div class="tab" style="left:186px;letter-spacing:0.45px">FastqWriter.java</div><svg style="position:absolute;left:293px;top:5px" width="8" height="8" viewBox="0 0 8 8" ><path d="M0.8 0.8 L7.2 7.2 M7.2 0.8 L0.8 7.2" stroke="#9a9a9a" stroke-width="1.5"/></svg><div class="abs" style="left:310px;top:0;width:183px;height:18px;background:linear-gradient(#e4e4e4,#d4d4d4)"></div><div class="abs" style="left:492px;top:0;width:1px;height:18px;background:#a0a0a0"></div><svg style="position:absolute;left:321px;top:1px" width="14" height="14" viewBox="0 0 14 14" overflow="visible"><circle cx="7" cy="7" r="6.4" fill="url(#gC)" stroke="#7aa4dc" stroke-width="1.1"/><path d="M9.4 5.5 V4.5 H5.5 Q4.5 4.5 4.5 5.5 V9.5 Q4.5 10.5 5.5 10.5 H9.4 V9.5" fill="none" stroke="#4e5e74" stroke-width="1.05"/></svg><div class="tab" style="left:337px;letter-spacing:0.38px">BasicFastqWriter.java</div><svg style="position:absolute;left:477px;top:5px" width="8" height="8" viewBox="0 0 8 8" ><path d="M0.8 0.8 L7.2 7.2 M7.2 0.8 L0.8 7.2" stroke="#9a9a9a" stroke-width="1.5"/></svg><div class="abs" style="left:494px;top:0;width:168px;height:22px;background:linear-gradient(#f2f2f2,#fafafa)"></div><svg style="position:absolute;left:505px;top:1px" width="14" height="14" viewBox="0 0 14 14" overflow="visible"><circle cx="7" cy="7" r="6.4" fill="url(#gC)" stroke="#7aa4dc" stroke-width="1.1"/><path d="M9.4 5.5 V4.5 H5.5 Q4.5 4.5 4.5 5.5 V9.5 Q4.5 10.5 5.5 10.5 H9.4 V9.5" fill="none" stroke="#4e5e74" stroke-width="1.05"/><path d="M9.5 -3.0 L15.5 1.5 L9.5 6.0Z" fill="#18c028" stroke="#108a18" stroke-width="0.6"/></svg><div class="tab" style="left:521.5px;letter-spacing:0.24px">PipeLineFastQ.java</div><svg style="position:absolute;left:646px;top:5px" width="8" height="8" viewBox="0 0 8 8" ><path d="M0.8 0.8 L7.2 7.2 M7.2 0.8 L0.8 7.2" stroke="#9a9a9a" stroke-width="1.5"/></svg><div class="abs" style="left:663px;top:0;width:24px;height:18px;background:linear-gradient(#e4e4e4,#d4d4d4)"></div><div class="abs" style="left:686px;top:0;width:1px;height:18px;background:#a0a0a0"></div><div class="abs" style="left:0;top:18px;width:493px;height:1px;background:#a0a0a0"></div><div class="abs" style="left:661px;top:18px;width:20px;height:1px;background:#a0a0a0"></div><div class="abs" style="left:0;top:19px;width:493px;height:3px;background:#f0f0f0"></div><div class="abs" style="left:661px;top:19px;width:20px;height:3px;background:#f0f0f0"></div><div class="abs" style="left:0;top:22px;width:669px;height:1px;background:#b4b4b4"></div><div class="abs" style="left:0;top:23px;width:24px;height:578px;background:#f2f2f2"></div><div class="abs" style="left:0;top:548px;width:669px;height:15px;background:#fffde0"></div><div class="abs" style="left:24px;top:23px;width:1px;height:578px;background:repeating-linear-gradient(#8a8a8a 0 1px,transparent 1px 2px)"></div><div class="abs" style="left:60px;top:83px;width:1px;height:480px;background:#e6e6e6"></div><div class="abs" style="left:88px;top:158px;width:1px;height:30px;background:#e6e6e6"></div><div class="abs" style="left:88px;top:218px;width:1px;height:105px;background:#e6e6e6"></div><div class="abs" style="left:88px;top:353px;width:1px;height:30px;background:#e6e6e6"></div><div class="abs" style="left:88px;top:503px;width:1px;height:15px;background:#e6e6e6"></div><div class="abs" style="left:116px;top:248px;width:1px;height:15px;background:#e6e6e6"></div><div class="abs" style="left:116px;top:293px;width:1px;height:15px;background:#e6e6e6"></div><svg style="position:absolute;left:20px;top:72px" width="11" height="12" viewBox="0 0 11 12" ><path d="M0.5 0.5 H8.5 V6.5 L4.5 10.5 L0.5 6.5Z" fill="#fff" stroke="#8a8a8a"/><path d="M2.5 4.5 H6.5" stroke="#777"/></svg><svg style="position:absolute;left:20px;top:565px" width="11" height="12" viewBox="0 0 11 12" ><path d="M0.5 10.5 H8.5 V4.5 L4.5 0.5 L0.5 4.5Z" fill="#fff" stroke="#8a8a8a"/><path d="M2.5 6.5 H6.5" stroke="#777"/></svg><div class="cl" style="top:55px;left:30px"><span class="k">public class</span> PipeLineFastQ {</div><div class="cl" style="top:70px;left:30px">    <span class="k">public static void</span> main(String[] args){</div><div class="cl" style="top:85px;left:30px">        String INPUT=<span class="s">&quot;&quot;</span>;</div><div class="cl" style="top:100px;left:30px">        String OUTPUT=<span class="s">&quot;&quot;</span>;</div><div class="cl" style="top:115px;left:30px"></div><div class="cl" style="top:130px;left:30px">        <span class="c">/<span class="ast">*</span> Get the input and output file name <span class="ast">*</span>/</span></div><div class="cl" style="top:145px;left:30px">        <span class="k">if</span>(args.<span class="f">length</span> != <span class="n">2</span>){</div><div class="cl" style="top:160px;left:30px">            <span class="i">PrintUsage</span>();</div><div class="cl" style="top:175px;left:30px">            System.<span class="i">exit</span>(<span class="n">0</span>);</div><div class="cl" style="top:190px;left:30px">        }</div><div class="cl" style="top:205px;left:30px">        <span class="k">for</span>(<span class="k">int</span> i=<span class="n">0</span>;i &lt; <span class="n">2</span>;i++){</div><div class="cl" style="top:220px;left:30px">            String[] tString = args[i].split(<span class="s">&quot;=&quot;</span>);</div><div class="cl" style="top:235px;left:30px">            <span class="k">if</span>(tString[<span class="n">0</span>].equals(<span class="s">&quot;INPUT&quot;</span>)){</div><div class="cl" style="top:250px;left:30px">                INPUT=tString[<span class="n">1</span>];</div><div class="cl" style="top:265px;left:30px">            }</div><div class="cl" style="top:280px;left:30px">            <span class="k">if</span>(tString[<span class="n">0</span>].equals(<span class="s">&quot;OUTPUT&quot;</span>)){</div><div class="cl" style="top:295px;left:30px">                OUTPUT=tString[<span class="n">1</span>];</div><div class="cl" style="top:310px;left:30px">            }</div><div class="cl" style="top:325px;left:30px">        }</div><div class="cl" style="top:340px;left:30px">        <span class="k">if</span>(INPUT.equals(<span class="s">&quot;&quot;</span>) || OUTPUT.equals(<span class="s">&quot;&quot;</span>)){</div><div class="cl" style="top:355px;left:30px">            <span class="i">PrintUsage</span>();</div><div class="cl" style="top:370px;left:30px">            System.<span class="i">exit</span>(<span class="n">0</span>);</div><div class="cl" style="top:385px;left:30px">        }</div><div class="cl" style="top:400px;left:30px"></div><div class="cl" style="top:415px;left:30px">        <span class="c">/<span class="ast">*</span> Read the input FastQ file <span class="ast">*</span>/</span></div><div class="cl" style="top:430px;left:30px">        <span class="c">// System.out.<span class="w">println</span>(INPUT + "\t" + OUTPUT);</span></div><div class="cl" style="top:445px;left:30px">        FastqReader <span class="g2"><span class="w">fastqIn</span></span> = <span class="k">new</span> FastqReader(<span class="k">new</span> File(INPUT));</div><div class="cl" style="top:460px;left:30px">        <span class="c">/<span class="ast">*</span><span class="ast">*</span></span></div><div class="cl" style="top:475px;left:30px">        <span class="c">BasicFastqWriter <span class="w">fastqOut</span> = new Basic<span class="w">Fastq</span>Writer(new File(OUTPUT));</span></div><div class="cl" style="top:490px;left:30px">        <span class="c">while (<span class="w">fastqIn</span>.hasNext()){</span></div><div class="cl" style="top:505px;left:30px">            <span class="c"><span class="w">fastqOut</span>.write(<span class="w">fastqIn</span>.next());</span></div><div class="cl" style="top:520px;left:30px">        <span class="c">}</span></div><div class="cl" style="top:535px;left:30px">        <span class="c"><span class="w">fastqOut</span>.close();</span></div><div class="cl" style="top:550px;left:30px">        <span class="c"><span class="ast">*</span>/</span></div><div class="cl" style="top:565px;left:30px">    }</div><div class="cl" style="top:580px;left:30px"></div><div class="cl" style="top:595px;left:30px">    <span class="c">/<span class="ast">*</span> Print usage <span class="ast">*</span>/</span></div><svg style="position:absolute;left:181px;top:441px" width="53" height="4" viewBox="0 0 53 4"><path d="M0 3.2 L2 0.4 L4 3.2 L6 0.4 L8 3.2 L10 0.4 L12 3.2 L14 0.4 L16 3.2 L18 0.4 L20 3.2 L22 0.4 L24 3.2 L26 0.4 L28 3.2 L30 0.4 L32 3.2 L34 0.4 L36 3.2 L38 0.4 L40 3.2 L42 0.4 L44 3.2 L46 0.4 L48 3.2 L50 0.4 L52 3.2" fill="none" stroke="#0a8a1a" stroke-width="0.95"/></svg><svg style="position:absolute;left:167px;top:456px" width="39" height="4" viewBox="0 0 39 4"><path d="M0 3.2 L2 0.4 L4 3.2 L6 0.4 L8 3.2 L10 0.4 L12 3.2 L14 0.4 L16 3.2 L18 0.4 L20 3.2 L22 0.4 L24 3.2 L26 0.4 L28 3.2 L30 0.4 L32 3.2 L34 0.4 L36 3.2 L38 0.4" fill="none" stroke="#0a8a1a" stroke-width="0.95"/></svg><svg style="position:absolute;left:118px;top:486px" width="39" height="4" viewBox="0 0 39 4"><path d="M0 3.2 L2 0.4 L4 3.2 L6 0.4 L8 3.2 L10 0.4 L12 3.2 L14 0.4 L16 3.2 L18 0.4 L20 3.2 L22 0.4 L24 3.2 L26 0.4 L28 3.2 L30 0.4 L32 3.2 L34 0.4 L36 3.2 L38 0.4" fill="none" stroke="#0a8a1a" stroke-width="0.95"/></svg><svg style="position:absolute;left:202px;top:486px" width="39" height="4" viewBox="0 0 39 4"><path d="M0 3.2 L2 0.4 L4 3.2 L6 0.4 L8 3.2 L10 0.4 L12 3.2 L14 0.4 L16 3.2 L18 0.4 L20 3.2 L22 0.4 L24 3.2 L26 0.4 L28 3.2 L30 0.4 L32 3.2 L34 0.4 L36 3.2 L38 0.4" fill="none" stroke="#0a8a1a" stroke-width="0.95"/></svg><svg style="position:absolute;left:342px;top:486px" width="39" height="4" viewBox="0 0 39 4"><path d="M0 3.2 L2 0.4 L4 3.2 L6 0.4 L8 3.2 L10 0.4 L12 3.2 L14 0.4 L16 3.2 L18 0.4 L20 3.2 L22 0.4 L24 3.2 L26 0.4 L28 3.2 L30 0.4 L32 3.2 L34 0.4 L36 3.2 L38 0.4" fill="none" stroke="#0a8a1a" stroke-width="0.95"/></svg><svg style="position:absolute;left:132px;top:501px" width="39" height="4" viewBox="0 0 39 4"><path d="M0 3.2 L2 0.4 L4 3.2 L6 0.4 L8 3.2 L10 0.4 L12 3.2 L14 0.4 L16 3.2 L18 0.4 L20 3.2 L22 0.4 L24 3.2 L26 0.4 L28 3.2 L30 0.4 L32 3.2 L34 0.4 L36 3.2 L38 0.4" fill="none" stroke="#0a8a1a" stroke-width="0.95"/></svg><svg style="position:absolute;left:111px;top:516px" width="39" height="4" viewBox="0 0 39 4"><path d="M0 3.2 L2 0.4 L4 3.2 L6 0.4 L8 3.2 L10 0.4 L12 3.2 L14 0.4 L16 3.2 L18 0.4 L20 3.2 L22 0.4 L24 3.2 L26 0.4 L28 3.2 L30 0.4 L32 3.2 L34 0.4 L36 3.2 L38 0.4" fill="none" stroke="#0a8a1a" stroke-width="0.95"/></svg><svg style="position:absolute;left:216px;top:516px" width="39" height="4" viewBox="0 0 39 4"><path d="M0 3.2 L2 0.4 L4 3.2 L6 0.4 L8 3.2 L10 0.4 L12 3.2 L14 0.4 L16 3.2 L18 0.4 L20 3.2 L22 0.4 L24 3.2 L26 0.4 L28 3.2 L30 0.4 L32 3.2 L34 0.4 L36 3.2 L38 0.4" fill="none" stroke="#0a8a1a" stroke-width="0.95"/></svg><svg style="position:absolute;left:83px;top:546px" width="39" height="4" viewBox="0 0 39 4"><path d="M0 3.2 L2 0.4 L4 3.2 L6 0.4 L8 3.2 L10 0.4 L12 3.2 L14 0.4 L16 3.2 L18 0.4 L20 3.2 L22 0.4 L24 3.2 L26 0.4 L28 3.2 L30 0.4 L32 3.2 L34 0.4 L36 3.2 L38 0.4" fill="none" stroke="#0a8a1a" stroke-width="0.95"/></svg>
</div>
<div class="abs" style="left:0;top:601px;width:973px;height:1px;background:#a6a6a6"></div>
</body></html>
